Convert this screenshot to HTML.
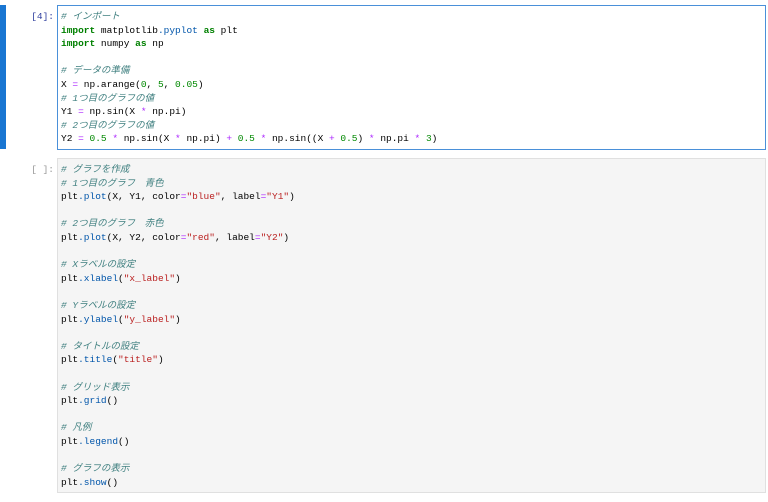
<!DOCTYPE html>
<html><head><meta charset="utf-8"><style>
body{margin:0;background:#fff;width:768px;height:502px;overflow:hidden;position:relative;font-family:"Liberation Mono","Noto Sans CJK JP",monospace;}
.bar{position:absolute;left:0;top:5px;width:6px;height:144px;background:#1976d2;}
.cell{position:absolute;left:57px;width:709px;box-sizing:border-box;}
.c1{top:5px;height:145px;background:#fff;border:1px solid #4a90d9;}
.c2{top:158px;height:335px;background:#f5f5f5;border:1px solid #e0e0e0;}
pre{margin:0;position:absolute;left:3px;font-family:inherit;font-size:9.5px;line-height:13.6px;color:#000;}
.c1 pre{top:4px}.c2 pre{top:4px}
.p{position:absolute;font-size:9.5px;line-height:13.6px;width:54px;text-align:right;left:0;}
.k{color:#008000;font-weight:bold}.c{color:#408080;font-style:italic}.n{color:#080}.o{color:#a2f}.s{color:#ba2121}.v{color:#05a}
</style></head><body>
<div class="bar"></div>
<div class="p" style="top:10px;color:#303f9f">[4]:</div>
<div class="cell c1"><pre><span class="c"># インポート</span>
<span class="k">import</span> matplotlib<span class="v">.pyplot</span> <span class="k">as</span> plt
<span class="k">import</span> numpy <span class="k">as</span> np

<span class="c"># データの準備</span>
X <span class="o">=</span> np.arange(<span class="n">0</span>, <span class="n">5</span>, <span class="n">0.05</span>)
<span class="c"># 1つ目のグラフの値</span>
Y1 <span class="o">=</span> np.sin(X <span class="o">*</span> np.pi)
<span class="c"># 2つ目のグラフの値</span>
Y2 <span class="o">=</span> <span class="n">0.5</span> <span class="o">*</span> np.sin(X <span class="o">*</span> np.pi) <span class="o">+</span> <span class="n">0.5</span> <span class="o">*</span> np.sin((X <span class="o">+</span> <span class="n">0.5</span>) <span class="o">*</span> np.pi <span class="o">*</span> <span class="n">3</span>)</pre></div>
<div class="p" style="top:163px;color:#999">[ ]:</div>
<div class="cell c2"><pre><span class="c"># グラフを作成</span>
<span class="c"># 1つ目のグラフ　青色</span>
plt<span class="v">.plot</span>(X, Y1, color<span class="o">=</span><span class="s">"blue"</span>, label<span class="o">=</span><span class="s">"Y1"</span>)

<span class="c"># 2つ目のグラフ　赤色</span>
plt<span class="v">.plot</span>(X, Y2, color<span class="o">=</span><span class="s">"red"</span>, label<span class="o">=</span><span class="s">"Y2"</span>)

<span class="c"># Xラベルの設定</span>
plt<span class="v">.xlabel</span>(<span class="s">"x_label"</span>)

<span class="c"># Yラベルの設定</span>
plt<span class="v">.ylabel</span>(<span class="s">"y_label"</span>)

<span class="c"># タイトルの設定</span>
plt<span class="v">.title</span>(<span class="s">"title"</span>)

<span class="c"># グリッド表示</span>
plt<span class="v">.grid</span>()

<span class="c"># 凡例</span>
plt<span class="v">.legend</span>()

<span class="c"># グラフの表示</span>
plt<span class="v">.show</span>()</pre></div>
</body></html>
